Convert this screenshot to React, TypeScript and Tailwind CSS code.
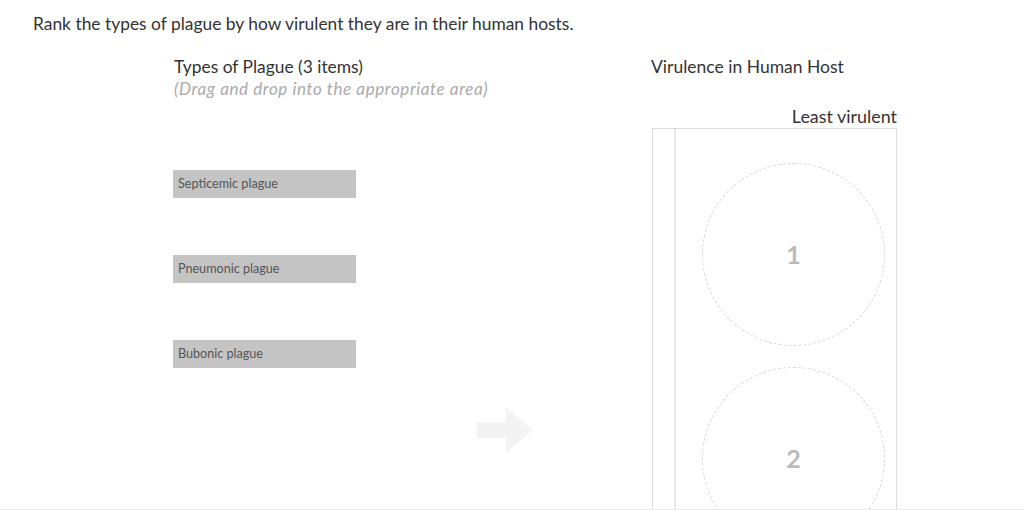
import React from 'react';

const items = ['Septicemic plague', 'Pneumonic plague', 'Bubonic plague'];
const slots = [1, 2];

function Arrow() {
  return (
    <svg width="57" height="47" viewBox="0 0 57 47" className="block">
      <path d="M0 15 H29 V0 L56 23 L29 46 V31 H0 Z" fill="#f3f3f3" />
    </svg>
  );
}

export default function App() {
  return (
    <div
      className="w-[1024px] h-[510px] overflow-hidden bg-white border-b border-[#e8e8e8] text-[#333]"
      style={{ fontFamily: 'Lato, "Open Sans", sans-serif' }}
    >
      <p className="pt-[12px] pl-[33px] text-[17.4px] leading-[24px]">
        Rank the types of plague by how virulent they are in their human hosts.
      </p>

      <div className="flex mt-[20px]">
        {/* Source list */}
        <div className="ml-[173px] w-[184px] shrink-0">
          <div className="pl-px text-[17.4px] leading-[22px] whitespace-nowrap">Types of Plague (3 items)</div>
          <div className="pl-px text-[17px] leading-[22px] italic tracking-[0.6px] text-[#aaa] whitespace-nowrap">
            (Drag and drop into the appropriate area)
          </div>
          <div className="mt-[70px] flex flex-col gap-[57px]">
            {items.map((item) => (
              <div key={item} className="w-[183px] h-[28px] bg-[#c4c4c4] flex items-center pl-[5px] text-[12.6px] text-[#555]">
                {item}
              </div>
            ))}
          </div>
        </div>

        {/* Arrow */}
        <div className="w-[294px] shrink-0 pt-[351px] pl-[120px]">
          <Arrow />
        </div>

        {/* Ranking target */}
        <div className="w-[246px] shrink-0">
          <div className="text-[17.5px] leading-[22px] whitespace-nowrap">Virulence in Human Host</div>
          <div className="mt-[27px] text-right text-[17.9px] leading-[22px]">Least virulent</div>
          <div className="mt-px ml-px h-[420px] border border-[#ddd] flex">
            <div className="w-[23px] border-r-2 border-[#e8e8e8]" />
            <div className="flex-1 pt-[34px] pl-[26px] flex flex-col gap-[21px]">
              {slots.map((n) => (
                <div
                  key={n}
                  className="w-[183px] h-[183px] shrink-0 rounded-full border border-dashed border-[#d6d6d6] flex items-center justify-center text-[25px] font-bold text-[#bbb]"
                >
                  {n}
                </div>
              ))}
            </div>
          </div>
        </div>
      </div>
    </div>
  );
}
